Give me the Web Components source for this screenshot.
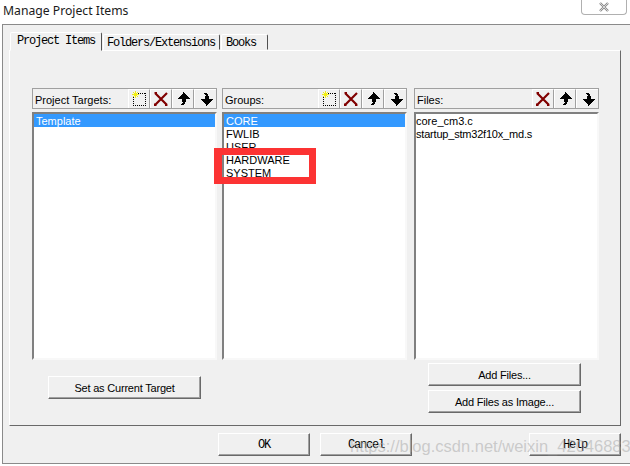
<!DOCTYPE html>
<html>
<head>
<meta charset="utf-8">
<style>
  html, body { margin: 0; padding: 0; background: #fff; }
  body { width: 630px; height: 466px; overflow: hidden; position: relative; font-family: "Liberation Sans", sans-serif; }
</style>
</head>
<body>
<template id="tool-icons">
  <svg data-icon="new" width="16" height="16" viewBox="0 0 16 16" shape-rendering="crispEdges">
    <path d="M3 2.5H14M14.5 2V15M15 14.5H2M2.5 15V5" fill="none" stroke="#000" stroke-dasharray="1 1"/>
    <path d="M4 0h1v2h1v-1h1v1h-1v1h2v1H6v1h1v1H6V5H5v2H4V5H3v1H2V5h1V4H1V3h2V2H2V1h1v1h1z" fill="#f2ee10"/>
  </svg>
  <svg data-icon="del" width="16" height="16" viewBox="0 0 16 16">
    <path d="M2 2l12 12M14 2L2 14" fill="none" stroke="#800000" stroke-width="2.2"/>
    <path d="M1 1l3 0 0 3zM15 15l-3 0 0-3zM1 15l0-3 3 3z" fill="#800000"/>
  </svg>
  <svg data-icon="up" width="16" height="16" viewBox="0 0 16 16" shape-rendering="crispEdges">
    <path d="M8 1h1v1h1v1h1v1h1v1h1v1h1v1h1v1h-4v3h-1v2H9v1H6v-1h1v-1h1v-1H7V8H3V7h1V6h1V5h1V4h1V3h1z" fill="#000"/>
  </svg>
  <svg data-icon="down" width="16" height="16" viewBox="0 0 16 16" shape-rendering="crispEdges">
    <path d="M8 15h1v-1h1v-1h1v-1h1v-1h1v-1h1V9h1V8h-4V5h-1V3H9V2H6v1h1v1h1v1H7v3H3v1h1v1h1v1h1v1h1v1h1z" fill="#000"/>
  </svg>
</template>

<win-dialog>
  <list-panel style="margin-right:5px" title-text="Project Targets:" tools="new del up down">
    <list-row selected>Template</list-row>
  </list-panel>
  <list-panel style="margin-right:7px" title-text="Groups:" tools="new del up down">
    <list-row selected>CORE</list-row>
    <list-row>FWLIB</list-row>
    <list-row>USER</list-row>
    <list-row>HARDWARE</list-row>
    <list-row>SYSTEM</list-row>
  </list-panel>
  <list-panel title-text="Files:" tools="del up down">
    <list-row style="padding-left:0">core_cm3.c</list-row>
    <list-row style="padding-left:0;letter-spacing:-0.2px">startup_stm32f10x_md.s</list-row>
  </list-panel>
</win-dialog>

<script>
class WinButton extends HTMLElement {
    constructor() {
        super();
        this.attachShadow({ mode: 'open' });
        this.shadowRoot.innerHTML = `
      <style>
        :host {
          display: flex;
          align-items: center;
          justify-content: center;
          box-sizing: border-box;
          width: 153px;
          height: 23px;
          background: #f0f0f0;
          border: 1px solid;
          border-color: #fff #696969 #696969 #fff;
          box-shadow: inset -1px -1px 0 #a0a0a0;
          font: 11px "Liberation Sans", sans-serif;
          letter-spacing: -0.2px;
          color: #000;
          white-space: nowrap;
        }
        :host([mono]) {
          width: 92px;
          font: 12px "Liberation Mono", monospace;
          letter-spacing: -1.2px;
        }
      </style>
      <slot></slot>
    `;
    }
}

class ListRow extends HTMLElement {
    constructor() {
        super();
        this.attachShadow({ mode: 'open' });
        this.shadowRoot.innerHTML = `
      <style>
        :host {
          display: block;
          height: 13px;
          padding-left: 2px;
          font: 11px/15px "Liberation Sans", sans-serif;
          color: #000;
          white-space: nowrap;
        }
        :host([selected]) { background: #3399ff; color: #fff; }
      </style>
      <slot></slot>
    `;
    }
}

class ListPanel extends HTMLElement {
    constructor() {
        super();
        this.attachShadow({ mode: 'open' });
        this.shadowRoot.innerHTML = `
      <style>
        :host { display: flex; flex-direction: column; width: 185px; height: 272px; flex: none; }
        .head {
          display: flex;
          align-items: center;
          justify-content: space-between;
          box-sizing: border-box;
          height: 21px;
          padding-left: 2px;
          border: 1px solid #a0a0a0;
          font: 11px "Liberation Sans", sans-serif;
          color: #000;
        }
        #label { padding-top: 2px; }
        .tools { display: flex; }
        .tool {
          display: flex;
          align-items: center;
          justify-content: center;
          width: 22px;
          height: 19px;
          box-sizing: border-box;
          background: #f0f0f0;
          border-right: 1px solid #a0a0a0;
          border-top: 1px solid #fff;
          border-left: 1px solid #fff;
        }
        .tool:last-child { border-right: 0; }
        .box {
          flex: 1;
          margin-top: 3px;
          box-sizing: border-box;
          background: #fff;
          border: 2px solid;
          border-color: #808080 #f8f8f8 #f8f8f8 #808080;
        }
      </style>
      <div class="head"><span id="label"></span><div class="tools" id="tools"></div></div>
      <div class="box"><slot></slot></div>
    `;
    }

    connectedCallback() {
        this.shadowRoot.getElementById('label').textContent = this.getAttribute('title-text');
        const tools = this.shadowRoot.getElementById('tools');
        const icons = document.getElementById('tool-icons').content;
        for (const name of this.getAttribute('tools').split(' ')) {
            const btn = document.createElement('div');
            btn.className = 'tool';
            btn.appendChild(icons.querySelector(`[data-icon="${name}"]`).cloneNode(true));
            tools.appendChild(btn);
        }
    }
}

class WinDialog extends HTMLElement {
    constructor() {
        super();
        this.attachShadow({ mode: 'open' });
        this.shadowRoot.innerHTML = `
      <style>
        :host { display: block; width: 630px; height: 466px; position: relative; overflow: hidden; }
        .title {
          display: flex;
          justify-content: space-between;
          height: 24px;
          padding-left: 3px;
          font: 12.2px/21px "Noto Sans", sans-serif;
          color: #1a1a1a;
        }
        .close {
          box-sizing: border-box;
          display: flex;
          align-items: center;
          justify-content: center;
          width: 46px;
          height: 15px;
          margin-right: 3px;
          border: 1px solid #b0b0b0;
          border-top: 0;
          border-radius: 0 0 4px 4px;
          background: #fff;
        }
        .frame {
          box-sizing: border-box;
          height: 440px;
          margin-left: 2px;
          background: #f0f0f0;
          border: 1px solid #8a8a8a;
          border-right: 0;
          padding: 7px 0 0 6px;
        }
        .tabs { display: flex; align-items: flex-end; height: 18px; padding-left: 1px; }
        .tab {
          box-sizing: border-box;
          height: 16px;
          padding: 2px 0 0 4px;
          background: #f0f0f0;
          border: 1px solid;
          border-color: #fff #505050 transparent #fff;
          border-radius: 2px 2px 0 0;
          font: 12px/12px "Liberation Mono", monospace;
          letter-spacing: -1.2px;
          color: #000;
          white-space: pre;
          margin-right: 1px;
        }
        .tab.active { height: 19px; padding: 2px 0 0 6px; margin-bottom: -1px; position: relative; z-index: 1; }
        .panel {
          box-sizing: border-box;
          width: 612px;
          height: 376px;
          border: 1px solid;
          border-color: #fff #696969 #696969 #fff;
          padding: 37px 0 0 22px;
        }
        .lists { display: flex; }
        .actions { display: flex; }
        .actions .left { margin: 16px 0 0 16px; }
        .actions .right { display: flex; flex-direction: column; gap: 4px; margin: 3px 0 0 227px; }
        .footer { display: flex; margin: 7px 0 0 209px; }
        .wm {
          position: absolute;
          left: 350px;
          top: 437px;
          font: 16.5px "Liberation Sans", sans-serif;
          color: rgba(170,170,170,0.55);
          white-space: nowrap;
        }
        .mark {
          position: absolute;
          left: 214px;
          top: 148px;
          width: 102px;
          height: 36px;
          box-sizing: border-box;
          border: 7px solid #fc3333;
          border-left-width: 8px;
          pointer-events: none;
        }
      </style>
      <div class="title">
        <span>Manage Project Items</span>
        <div class="close">
          <svg width="12" height="10" viewBox="0 0 12 10"><path d="M2 1l8 8M10 1L2 9" stroke="#8a8a8a" stroke-width="2.4" fill="none"/><path d="M2 1l8 8M10 1L2 9" stroke="#e8e8e8" stroke-width="0.8" fill="none"/></svg>
        </div>
      </div>
      <div class="frame">
        <div class="tabs">
          <div class="tab active" style="width:92px">Project Items</div>
          <div class="tab" style="width:117px;padding-left:3px">Folders/Extensions</div>
          <div class="tab" style="width:47px">Books</div>
        </div>
        <div class="panel">
          <div class="lists"><slot></slot></div>
          <div class="actions">
            <win-button class="left">Set as Current Target</win-button>
            <div class="right">
              <win-button>Add Files...</win-button>
              <win-button>Add Files as Image...</win-button>
            </div>
          </div>
        </div>
        <div class="footer">
          <win-button mono>OK</win-button>
          <win-button mono style="margin-left:10px">Cancel</win-button>
          <win-button mono style="margin-left:117px">Help</win-button>
        </div>
      </div>
      <div class="mark"></div>
      <div class="wm">https://blog.csdn.net/weixin_42046883</div>
    `;
    }
}

customElements.define('win-button', WinButton);
customElements.define('list-row', ListRow);
customElements.define('list-panel', ListPanel);
customElements.define('win-dialog', WinDialog);
</script>
</body>
</html>
